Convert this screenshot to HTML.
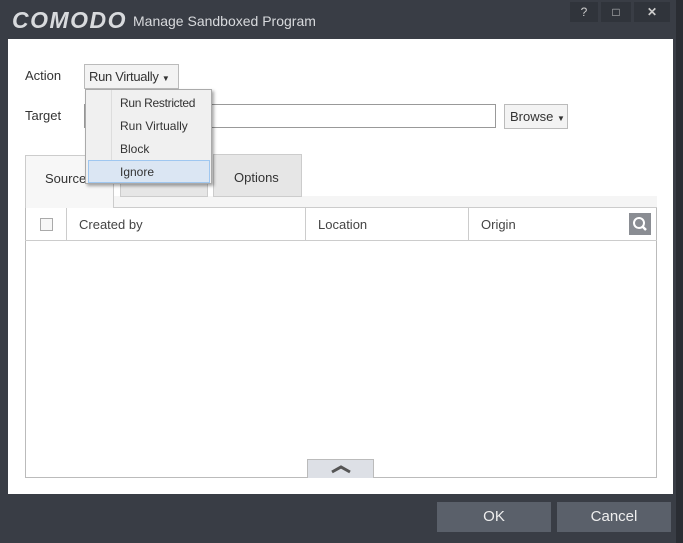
<!DOCTYPE html>
<html><head><style>
*{box-sizing:border-box;margin:0;padding:0}
body{width:683px;height:543px;background:#393d45;font-family:"Liberation Sans",sans-serif;font-size:13px;color:#333;position:relative;overflow:hidden}
.a{position:absolute;white-space:nowrap}
.logo{left:12px;top:7px;font-size:23px;font-weight:bold;font-style:italic;color:#d8dadd;letter-spacing:1.5px}
.ttl{left:133px;top:13px;font-size:14px;color:#d8dadd}
.tb{top:2px;height:20px;background:#30343b;color:#ccc;text-align:center;font-size:12px;line-height:20px}
.main{left:8px;top:39px;width:665px;height:455px;background:#fff}
.btn{top:502px;height:30px;background:#5a606a;color:#eee;font-size:15px;text-align:center;line-height:30px}
.box{border:1px solid #bbb;background:#f3f3f3}
.mi{position:absolute;left:34px;font-size:12px;color:#333}
</style></head><body>
<div class="a logo">COMODO</div>
<div class="a ttl">Manage Sandboxed Program</div>
<div class="a tb" style="left:570px;width:28px">?</div>
<div class="a tb" style="left:601px;width:30px">&#9633;</div>
<div class="a tb" style="left:634px;width:36px;font-weight:bold">✕</div>
<div class="a main"></div>
<div class="a" style="left:25px;top:68px;font-size:13px">Action</div>
<div class="a box" style="left:84px;top:64px;width:95px;height:25px;padding:4px 4px;font-size:13px;letter-spacing:-0.3px">Run Virtually <span style="font-size:8px">&#9660;</span></div>
<div class="a" style="left:25px;top:108px">Target</div>
<div class="a" style="left:84px;top:104px;width:412px;height:24px;border:1px solid #999;background:#fff"></div>
<div class="a box" style="left:504px;top:104px;width:64px;height:25px;padding:4px 5px">Browse <span style="font-size:8px">&#9660;</span></div>
<div class="a" style="left:25px;top:196px;width:632px;height:282px;border:1px solid #bbb;background:#fff"></div>
<div class="a" style="left:25px;top:196px;width:632px;height:12px;background:#f5f5f5;border-bottom:1px solid #ccc"></div>
<div class="a" style="left:25px;top:155px;width:89px;height:53px;background:#f7f7f7;border:1px solid #ccc;border-bottom:none;padding:15px 0 0 19px">Source</div>
<div class="a" style="left:120px;top:155px;width:88px;height:42px;background:#e6e6e6;border:1px solid #ccc"></div>
<div class="a" style="left:213px;top:154px;width:89px;height:43px;background:#e6e6e6;border:1px solid #ccc;padding:15px 0 0 20px">Options</div>
<div class="a" style="left:25px;top:240px;width:632px;height:1px;background:#ccc"></div>
<div class="a" style="left:66px;top:208px;width:1px;height:32px;background:#ccc"></div>
<div class="a" style="left:305px;top:208px;width:1px;height:32px;background:#ccc"></div>
<div class="a" style="left:468px;top:208px;width:1px;height:32px;background:#ccc"></div>
<div class="a" style="left:40px;top:218px;width:13px;height:13px;border:1px solid #aaa;background:#f7f7f7"></div>
<div class="a" style="left:79px;top:217px;color:#444">Created by</div>
<div class="a" style="left:318px;top:217px;color:#444">Location</div>
<div class="a" style="left:481px;top:217px;color:#444">Origin</div>
<div class="a" style="left:629px;top:213px;width:22px;height:22px;background:#8a8d93">
<svg width="22" height="22"><circle cx="10" cy="10" r="5" stroke="#fff" stroke-width="2" fill="none"/><line x1="13.5" y1="13.5" x2="17" y2="17" stroke="#fff" stroke-width="2.5"/></svg></div>
<div class="a" style="left:307px;top:459px;width:67px;height:19px;background:#dde0e6;border:1px solid #bbb;border-bottom:none">
<svg width="67" height="18"><path d="M24 12 L33 7 L42 12" stroke="#555" stroke-width="3" fill="none"/></svg></div>
<div class="a" style="left:85px;top:89px;width:127px;height:95px;background:#f0f0f0;border:1px solid #aaa;box-shadow:2px 2px 3px rgba(0,0,0,.35)">
<div class="a" style="left:25px;top:0;width:1px;height:93px;background:#ddd"></div>
<div class="a" style="left:2px;top:70px;width:122px;height:23px;background:#dbe6f3;border:1px solid #9fc7f0"></div>
<div class="mi" style="top:6px;letter-spacing:-0.3px">Run Restricted</div>
<div class="mi" style="top:29px">Run Virtually</div>
<div class="mi" style="top:52px">Block</div>
<div class="mi" style="top:75px">Ignore</div>
</div>
<div class="a btn" style="left:437px;width:114px">OK</div>
<div class="a btn" style="left:557px;width:114px">Cancel</div>
<div class="a" style="left:676px;top:0;width:7px;height:543px;background:#2a2d33"></div>
</body></html>
